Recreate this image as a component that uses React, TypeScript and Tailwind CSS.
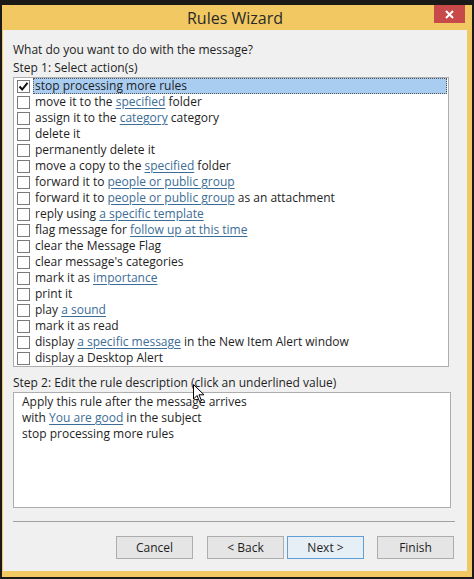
const actions: { parts: (string | { link: string })[]; checked?: boolean }[] = [
  { parts: ['stop processing more rules'], checked: true },
  { parts: ['move it to the ', { link: 'specified' }, ' folder'] },
  { parts: ['assign it to the ', { link: 'category' }, ' category'] },
  { parts: ['delete it'] },
  { parts: ['permanently delete it'] },
  { parts: ['move a copy to the ', { link: 'specified' }, ' folder'] },
  { parts: ['forward it to ', { link: 'people or public group' }] },
  { parts: ['forward it to ', { link: 'people or public group' }, ' as an attachment'] },
  { parts: ['reply using ', { link: 'a specific template' }] },
  { parts: ['flag message for ', { link: 'follow up at this time' }] },
  { parts: ['clear the Message Flag'] },
  { parts: ["clear message's categories"] },
  { parts: ['mark it as ', { link: 'importance' }] },
  { parts: ['print it'] },
  { parts: ['play ', { link: 'a sound' }] },
  { parts: ['mark it as read'] },
  { parts: ['display ', { link: 'a specific message' }, ' in the New Item Alert window'] },
  { parts: ['display a Desktop Alert'] },
];

function Link({ children }: { children: React.ReactNode }) {
  return <span className="text-[#3c6d96] underline decoration-[#3c6d96] underline-offset-2">{children}</span>;
}

function Checkbox({ checked }: { checked?: boolean }) {
  return (
    <span className="flex h-[13px] w-[13px] shrink-0 items-center justify-center border border-[#7a7a7a] bg-white">
      {checked && (
        <svg width="11" height="11" viewBox="0 0 11 11">
          <path d="M1.5 5.5 L4.2 8.5 L9.5 1.8" fill="none" stroke="#111" strokeWidth="2" />
        </svg>
      )}
    </span>
  );
}

function WinButton({ label, focused, className }: { label: string; focused?: boolean; className?: string }) {
  return (
    <button
      className={
        'flex h-[23px] w-[77px] items-center justify-center border bg-[#e5e5e5] text-[12px] text-[#1e1e1e] ' +
        (focused ? 'border-[#5d9fd6] bg-[#e6eef6] ' : 'border-[#adadad] ') +
        (className ?? '')
      }
    >
      {label}
    </button>
  );
}

export default function App() {
  return (
    <div
      className="relative h-[579px] w-[474px] overflow-hidden bg-[#1b1a18] pb-[2px] pl-[2px] pr-[2px] pt-[5px] text-[12px] leading-[16px] text-[#1e1e1e]"
      style={{ fontFamily: '"Open Sans", "Noto Sans", sans-serif' }}
    >
      <div className="flex h-full flex-col bg-[#f1c862] pb-[6px] pl-[1px] pr-[5px]">
        {/* title bar */}
        <div className="relative flex h-[25px] shrink-0 items-center justify-center">
          <span className="text-[16px] text-[#2a2a2a]">Rules Wizard</span>
          <div className="absolute right-[2px] top-0 flex h-[18px] w-[31px] items-center justify-center bg-[#c8494a]">
            <svg width="9" height="9" viewBox="0 0 9 9">
              <path d="M1 1 L8 8 M8 1 L1 8" stroke="#fff" strokeWidth="2" />
            </svg>
          </div>
        </div>

        {/* body */}
        <div className="flex flex-1 flex-col bg-[#f0f0f0] pl-[10px] pr-[13px] pt-[11px]">
          <div className="leading-[18px]">What do you want to do with the message?</div>
          <div className="leading-[18px]">Step 1: Select action(s)</div>

          <div className="w-[436px] border border-[#adadad] bg-white">
            {actions.map((a, i) => (
              <div key={i} className="flex h-[16px] items-center pl-[3px] pr-[1px]">
                <Checkbox checked={a.checked} />
                <div
                  className={
                    'ml-[3px] flex h-[16px] flex-1 items-center whitespace-nowrap pl-[1px] ' +
                    (i === 0 ? 'border border-dotted border-[#555] bg-[#a9cdf1]' : 'border border-transparent')
                  }
                >
                  {a.parts.map((p, j) =>
                    typeof p === 'string' ? (
                      <span key={j} className="whitespace-pre">
                        {p}
                      </span>
                    ) : (
                      <Link key={j}>{p.link}</Link>
                    ),
                  )}
                </div>
              </div>
            ))}
          </div>

          <div className="mt-[7px] leading-[18px]">Step 2: Edit the rule description (click an underlined value)</div>
          <div className="h-[116px] w-[438px] border border-[#adadad] bg-white px-[8px] pt-[1px]">
            <div>Apply this rule after the message arrives</div>
            <div>
              with <Link>You are good</Link> in the subject
            </div>
            <div>stop processing more rules</div>
          </div>

          <div className="mt-[13px] h-[2px] w-[442px] border-t border-[#a0a0a0] border-b-white" />

          <div className="mt-[13px] flex justify-end">
            <WinButton label="Cancel" />
            <WinButton label="< Back" className="ml-[14px]" />
            <WinButton label="Next >" focused className="ml-[3px]" />
            <WinButton label="Finish" className="ml-[13px]" />
          </div>
        </div>
      </div>

      {/* mouse pointer */}
      <svg className="absolute left-[193px] top-[384px]" width="12" height="19" viewBox="0 0 12 19">
        <path d="M0.5 0.5 L0.5 15 L4 11.5 L6.5 17.5 L8.5 16.6 L6 10.8 L11 10.8 Z" fill="#fff" stroke="#000" strokeWidth="1" />
      </svg>
    </div>
  );
}
